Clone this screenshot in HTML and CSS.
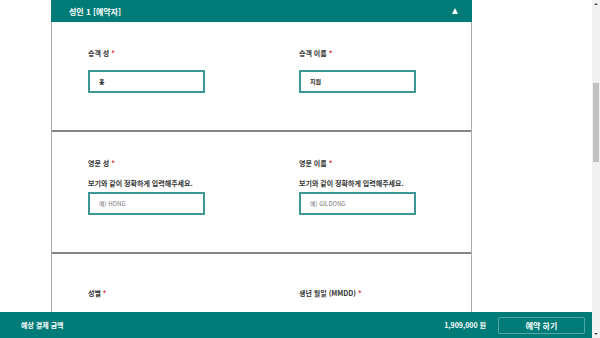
FILE: index.html
```html
<!DOCTYPE html>
<html lang="ko">
<head>
<meta charset="UTF-8">
<meta name="viewport" content="width=device-width, initial-scale=1.0">
<title>예약자 정보</title>
<link rel="stylesheet" href="styles.css">
</head>
<body>

<div class="window">
  <div class="viewport">
    <div class="passenger">
      <div class="passenger-head">
        <span>성인 1 [예약자]</span>
        <span class="toggle"></span>
      </div>

      <div class="form-row">
        <div class="field">
          <label>승객 성 <em>*</em></label>
          <input type="text" value="홍">
        </div>
        <div class="field">
          <label>승객 이름 <em>*</em></label>
          <input type="text" value="지원">
        </div>
      </div>

      <div class="form-row">
        <div class="field">
          <label>영문 성 <em>*</em></label>
          <p class="hint">보기와 같이 정확하게 입력해주세요.</p>
          <input type="text" placeholder="예) HONG">
        </div>
        <div class="field">
          <label>영문 이름 <em>*</em></label>
          <p class="hint">보기와 같이 정확하게 입력해주세요.</p>
          <input type="text" placeholder="예) GILDONG">
        </div>
      </div>

      <div class="form-row last">
        <div class="field">
          <label>성별 <em>*</em></label>
          <input type="text" class="select">
        </div>
        <div class="field">
          <label>생년 월일 (MMDD) <em>*</em></label>
          <input type="text" class="select">
        </div>
      </div>
    </div>

    <div class="pay-bar">
      <span class="pay-title">예상 결제 금액</span>
      <span class="pay-total">1,909,000 원</span>
      <button class="pay-button">예약 하기</button>
    </div>
  </div>

  <div class="scrollbar">
    <span class="arrow up"></span>
    <div class="track"><div class="thumb"></div></div>
    <span class="arrow down"></span>
  </div>
</div>

</body>
</html>
```

FILE: styles.css
```css
body {
  margin: 0;
  padding: 0;
  font-family: "Noto Sans CJK KR", "Noto Sans", sans-serif;
  background-color: #fff;
  overflow: hidden;
}

.window {
  display: flex;
  width: 600px;
  height: 338px;
}

.viewport {
  position: relative;
  flex: 1;
  overflow: hidden;
}

.passenger {
  width: 419px;
  margin-left: 51px;
  border-left: 1px solid #a8a8a8;
  border-right: 1px solid #a8a8a8;
}

.passenger-head {
  display: flex;
  justify-content: space-between;
  align-items: center;
  height: 22px;
  padding: 0 14px 0 18px;
  margin: 0 -1px;
  background-color: #007b78;
  color: #fff;
  font-size: 8px;
  font-weight: bold;
}

.toggle {
  width: 0;
  height: 0;
  border-left: 3.5px solid transparent;
  border-right: 3.5px solid transparent;
  border-bottom: 6px solid #fff;
}

.form-row {
  display: grid;
  grid-template-columns: 211px 117px;
  padding: 27px 0 37px 36px;
  border-bottom: 2px solid #858585;
}

.form-row.last {
  padding-top: 35px;
  border-bottom: none;
}

.field {
  display: flex;
  flex-direction: column;
}

label {
  display: block;
  height: 9px;
  line-height: 9px;
  margin-bottom: 12px;
  font-size: 7px;
  font-weight: bold;
  color: #333;
}

label em {
  font-style: normal;
  color: #e3262f;
}

.hint {
  height: 9px;
  line-height: 9px;
  margin: -1px 0 4px;
  font-size: 7px;
  font-weight: bold;
  color: #333;
}

input[type="text"] {
  box-sizing: border-box;
  width: 117px;
  height: 23px;
  padding: 0 9px;
  border: 2px solid #3d9895;
  font-family: inherit;
  font-size: 6px;
  font-weight: bold;
  color: #222;
}

input::placeholder {
  font-weight: normal;
  color: #777;
}

input.select {
  margin-top: 2px;
  border-color: #e4eeee;
}

.pay-bar {
  position: absolute;
  left: 0;
  right: 0;
  bottom: 0;
  display: flex;
  align-items: center;
  height: 26px;
  padding: 0 7px 0 21px;
  background-color: #007b78;
  color: #fff;
  font-size: 7px;
  font-weight: bold;
}

.pay-title {
  flex: 1;
}

.pay-total {
  margin-right: 12px;
}

.pay-button {
  width: 87px;
  height: 17px;
  border: 1px solid #52aaa7;
  border-radius: 2px;
  background-color: #007b78;
  color: #fff;
  font-family: inherit;
  font-size: 8px;
  font-weight: bold;
}

.scrollbar {
  display: flex;
  flex-direction: column;
  align-items: center;
  width: 8px;
  background-color: #f1f1f1;
}

.track {
  flex: 1;
  width: 100%;
  display: flex;
  justify-content: center;
  padding-top: 75px;
}

.thumb {
  width: 6px;
  height: 79px;
  background-color: #c1c1c1;
}

.arrow {
  width: 0;
  height: 0;
  margin: 3px 0;
  border-left: 2px solid transparent;
  border-right: 2px solid transparent;
}

.arrow.up {
  border-bottom: 2px solid #505050;
}

.arrow.down {
  border-top: 2px solid #505050;
}
```
